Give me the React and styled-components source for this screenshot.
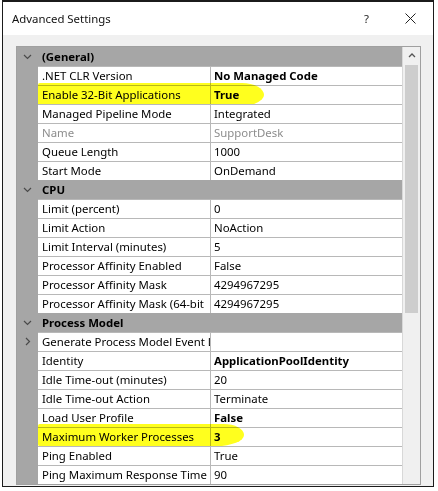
import React from 'react'
import styled, {createGlobalStyle} from 'styled-components'

const GlobalStyle = createGlobalStyle`
  html, body {
    margin: 0;
    padding: 0;
    background: #fff;
  }
  body {
    font-family: "Noto Sans", "Open Sans", sans-serif;
    font-size: 11.4px;
    color: #000;
  }
`;

const Colors = {
  frame: '#1b1b1b',
  body: '#f0f0f0',
  cat: '#a6a6a6',
  line: '#b8b8b8',
  muted: '#8d8d8d',
  thumb: '#cdcdcd',
};

const sections = [
  {
    title: '(General)',
    rows: [
      {name: '.NET CLR Version', value: 'No Managed Code', bold: true},
      {name: 'Enable 32-Bit Applications', value: 'True', bold: true, mark: {width: 226, top: -3, height: 24}},
      {name: 'Managed Pipeline Mode', value: 'Integrated'},
      {name: 'Name', value: 'SupportDesk', muted: true},
      {name: 'Queue Length', value: '1000'},
      {name: 'Start Mode', value: 'OnDemand'},
    ]
  },
  {
    title: 'CPU',
    rows: [
      {name: 'Limit (percent)', value: '0'},
      {name: 'Limit Action', value: 'NoAction'},
      {name: 'Limit Interval (minutes)', value: '5'},
      {name: 'Processor Affinity Enabled', value: 'False'},
      {name: 'Processor Affinity Mask', value: '4294967295'},
      {name: 'Processor Affinity Mask (64-bit', value: '4294967295'},
    ]
  },
  {
    title: 'Process Model',
    rows: [
      {name: 'Generate Process Model Event L', value: '', expandable: true},
      {name: 'Identity', value: 'ApplicationPoolIdentity', bold: true},
      {name: 'Idle Time-out (minutes)', value: '20'},
      {name: 'Idle Time-out Action', value: 'Terminate'},
      {name: 'Load User Profile', value: 'False', bold: true},
      {name: 'Maximum Worker Processes', value: '3', bold: true, mark: {width: 206, top: -4, height: 22}},
      {name: 'Ping Enabled', value: 'True'},
      {name: 'Ping Maximum Response Time', value: '90'},
    ]
  },
];


/******************************WINDOW*****************************/

const Frame = styled.div`
  box-sizing: border-box;
  margin-left: 2px;
  width: 432px;
  height: 487px;
  border: 1px solid ${Colors.frame};
  border-top-width: 2px;
  background: ${Colors.body};
  display: flex;
  flex-direction: column;
  overflow: hidden;
`;

const TitleBar = styled.div`
  height: 33px;
  flex-shrink: 0;
  background: #fff;
  display: flex;
  align-items: center;
  padding-left: 9px;
  padding-right: 17px;
`;

const Title = styled.div`
  flex: 1;
  color: #111;
`;

const HelpButton = styled.span`
  color: #222;
  margin-right: 36px;
`;

const CloseButton = styled.svg`
  width: 11px;
  height: 11px;
  display: block;
`;

const Body = styled.div`
  flex: 1;
  padding: 11px 12px 0 13px;
`;


/******************************GRID*****************************/

const Grid = styled.div`
  width: 405px;
  box-sizing: border-box;
  border: 1px solid #a0a0a0;
  display: flex;
`;

const Table = styled.div`
  flex: 1;
  display: flex;
  flex-direction: column;
`;

const CategoryRow = styled.div`
  height: 19px;
  background: ${Colors.cat};
  display: flex;
  align-items: center;
  font-weight: 700;
  line-height: 19px;
`;

const CategoryLabel = styled.span`
  padding-left: 4px;
`;

const Chevron = styled.span`
  width: 21px;
  display: flex;
  justify-content: center;
  align-items: center;
`;

const Row = styled.div`
  position: relative;
  height: 19px;
  display: flex;
  box-sizing: border-box;
  border-top: 1px solid ${Colors.line};
`;

const Gutter = styled.div`
  width: 21px;
  flex-shrink: 0;
  background: ${Colors.cat};
  margin-top: -1px;
  display: flex;
  align-items: center;
  justify-content: center;
`;

const Cell = styled.div`
  background: #fff;
  line-height: 18px;
  white-space: nowrap;
  overflow: hidden;
  box-sizing: border-box;
  color: ${p => p.muted ? Colors.muted : '#000'};
  font-weight: ${p => p.bold ? 700 : 400};
`;

const NameCell = styled(Cell)`
  width: 173px;
  flex-shrink: 0;
  padding-left: 4px;
  border-right: 1px solid ${Colors.line};
`;

const ValueCell = styled(Cell)`
  flex: 1;
  padding-left: 3px;
`;

const Marker = styled.span`
  position: absolute;
  left: 21px;
  background: #ffff1e;
  mix-blend-mode: multiply;
  border-radius: 2px 22px 30px 2px / 2px 12px 12px 2px;
  filter: blur(0.6px);
  pointer-events: none;
`;

const ScrollBar = styled.div`
  width: 17px;
  flex-shrink: 0;
  background: ${Colors.body};
  border-left: 1px solid #d8d8d8;
  display: flex;
  flex-direction: column;
  align-items: center;
`;

const ScrollArrow = styled.div`
  height: 17px;
  display: flex;
  align-items: center;
  justify-content: center;
`;

const ScrollThumb = styled.div`
  width: 13px;
  height: 248px;
  margin-top: 1px;
  background: ${Colors.thumb};
`;


const ChevronDown = () => (
  <svg width="9" height="6" viewBox="0 0 9 6">
    <path d="M1 1 L4.5 4.5 L8 1" fill="none" stroke="#4a4a4a" strokeWidth="1.2"/>
  </svg>
);

const ChevronRight = () => (
  <svg width="6" height="9" viewBox="0 0 6 9">
    <path d="M1 1 L4.5 4.5 L1 8" fill="none" stroke="#4a4a4a" strokeWidth="1.2"/>
  </svg>
);

const PropertyRow = ({row}) => (
  <Row>
    <Gutter>{row.expandable && <ChevronRight/>}</Gutter>
    <NameCell muted={row.muted}>{row.name}</NameCell>
    <ValueCell muted={row.muted} bold={row.bold}>{row.value}</ValueCell>
    {row.mark && (
      <Marker style={{width: row.mark.width, top: row.mark.top, height: row.mark.height}}/>
    )}
  </Row>
);

export default function App() {
  return (
    <>
      <GlobalStyle/>
      <Frame>
        <TitleBar>
          <Title>Advanced Settings</Title>
          <HelpButton>?</HelpButton>
          <CloseButton viewBox="0 0 11 11">
            <path d="M0.5 0.5 L10.5 10.5 M10.5 0.5 L0.5 10.5" stroke="#222" strokeWidth="1"/>
          </CloseButton>
        </TitleBar>
        <Body>
          <Grid>
            <Table>
              {sections.map(s => (
                <React.Fragment key={s.title}>
                  <CategoryRow>
                    <Chevron><ChevronDown/></Chevron>
                    <CategoryLabel>{s.title}</CategoryLabel>
                  </CategoryRow>
                  {s.rows.map(r => <PropertyRow key={r.name} row={r}/>)}
                </React.Fragment>
              ))}
            </Table>
            <ScrollBar>
              <ScrollArrow>
                <svg width="8" height="5" viewBox="0 0 8 5">
                  <path d="M1 4 L4 1 L7 4" fill="none" stroke="#555" strokeWidth="1.3"/>
                </svg>
              </ScrollArrow>
              <ScrollThumb/>
            </ScrollBar>
          </Grid>
        </Body>
      </Frame>
    </>
  )
}
